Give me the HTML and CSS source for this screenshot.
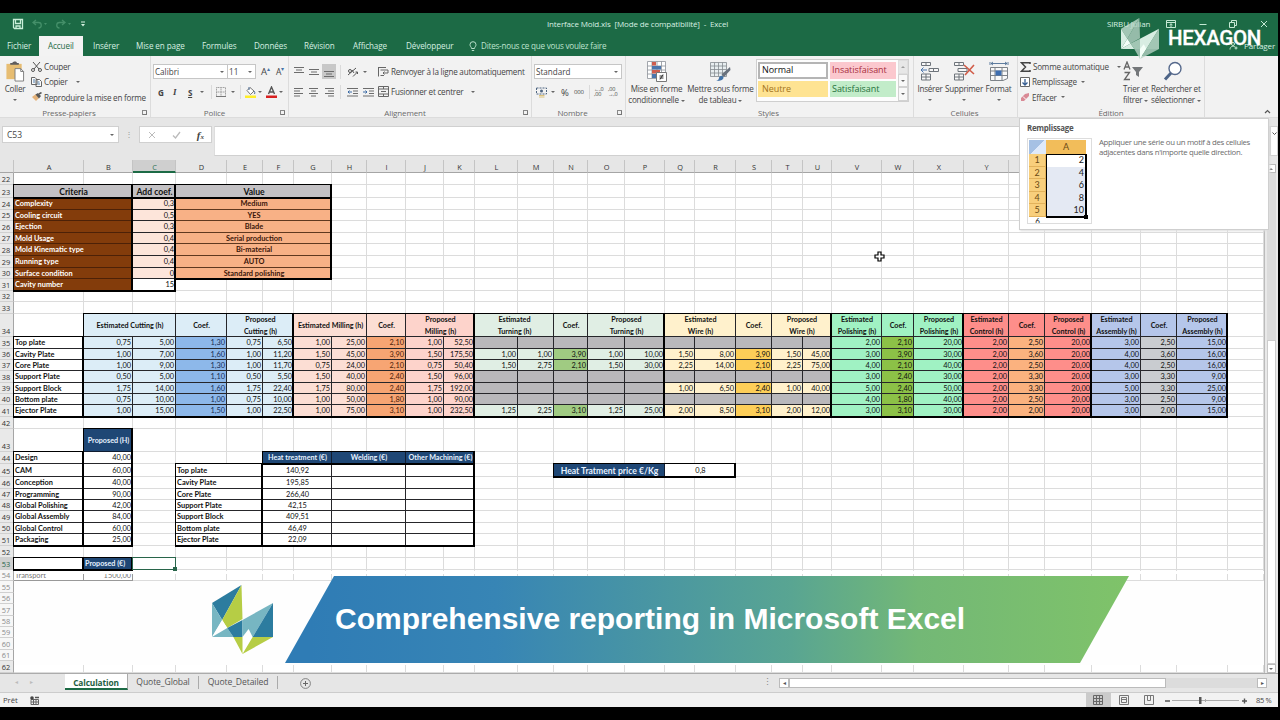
FILE: index.html
```html
<!DOCTYPE html>
<html lang="fr">
<head>
<meta charset="utf-8">
<title>Interface Mold.xls - Excel</title>
<link rel="stylesheet" href="styles.css">
</head>
<body>
<svg class="defs" width="0" height="0">
  <symbol id="mark" viewBox="0 0 60 69" preserveAspectRatio="none">
    <path class="m-dark" d="M0 18 29 0 10 35Z"/>
    <path class="m-light" d="M0 18 10 35 0 52Z"/>
    <path class="m-green" d="M29 0 30 34 15 43 10 35Z"/>
    <path class="m-white" d="M10 35 15 43 0 52Z"/>
    <path class="m-light" d="M0 52 15 43 21 52Z"/>
    <path class="m-dark" d="M15 43 30 35V52H21Z"/>
    <path class="m-light" d="M30 35 60 18 40 52H30Z"/>
    <path class="m-white" d="M30 69V52L36 44 40 52Z"/>
    <path class="m-dark" d="M60 18V52H40Z"/>
    <path class="m-green" d="M40 52H60L30 69ZM21 52H30V69Z"/>
  </symbol>
</svg>
<div class="window">
  <header class="titlebar">
    <div class="quick">
      <svg width="12" height="12" viewBox="0 0 12 12"><path d="M1.5 1.5H10.5V10.5H2.5L1.5 9.5ZM3.5 1.5V5.5H8.5V1.5M4 10.5V8H8V10.5" fill="none" stroke="#c9efd9" stroke-width="1.3"/></svg>
      <svg class="dim" width="16" height="10" viewBox="0 0 16 10"><path d="M1 3.5H6.5A2.7 2.7 0 0 1 6.5 9M4 1 1 3.5 4 6" fill="none" stroke="#75bd95" stroke-width="1.3"/><path d="M12 4h3l-1.5 2z" fill="#75bd95"/></svg>
      <svg class="dim" width="16" height="10" viewBox="0 0 16 10"><path d="M9 3.5H3.5A2.7 2.7 0 0 0 3.5 9M6 1 9 3.5 6 6" fill="none" stroke="#75bd95" stroke-width="1.3"/><path d="M12 4h3l-1.5 2z" fill="#75bd95"/></svg>
      <svg width="6" height="6" viewBox="0 0 6 6"><path d="M1 1H5" stroke="#d5f0e0"/><path d="M1 3h4L3 5.5z" fill="#d5f0e0"/></svg>
    </div>
    <div class="doc">Interface Mold.xls&nbsp; [Mode de compatibilité]&nbsp; -&nbsp; Excel</div>
    <div class="user">SIRBU Julian</div>
    <div class="winbtns">
      <svg width="10" height="8" viewBox="0 0 10 8"><path d="M.5.5H9.5V7.5H.5ZM.5 2.5H9.5M5 7V4M3.500 5 5 3.700 6.500 5" fill="none" stroke="#c5e9d4"/></svg>
      <svg width="8" height="8" viewBox="0 0 8 8"><path d="M.5 4.500h7" stroke="#c5e9d4"/></svg>
      <svg width="8" height="8" viewBox="0 0 8 8"><path d="M.5 2.500h5v5h-5zM2.500 2V.5h5v5H6" fill="none" stroke="#c5e9d4"/></svg>
      <svg width="8" height="8" viewBox="0 0 8 8"><path d="M1 1 7 7M7 1 1 7" stroke="#c5e9d4"/></svg>
    </div>
  </header>
  <nav class="tabs">
    <span>Fichier</span><span class="on">Accueil</span><span>Insérer</span><span>Mise en page</span><span>Formules</span><span>Données</span><span>Révision</span><span>Affichage</span><span>Développeur</span>
    <span class="tell"><svg width="8" height="11" viewBox="0 0 8 11"><path d="M2.500 7.500C2.500 6 1 5.500 1 3.700a3 3 0 0 1 6 0C7 5.500 5.500 6 5.500 7.500ZM2.800 9.500H5.200" fill="none" stroke="#b7dfc8"/></svg>Dites-nous ce que vous voulez faire</span>
    <span class="share"><svg width="9" height="8" viewBox="0 0 9 8"><circle cx="4" cy="2" r="1.500" fill="none" stroke="#c5e9d4"/><path d="M1 7.500C1 4 5 3.500 6 5M5.500 6h3M7 4.500v3" fill="none" stroke="#c5e9d4"/></svg>Partager</span>
  </nav>

  <section class="ribbon">
    <div class="group g-clip">
      <div class="body">
        <div class="big paste">
          <svg width="20" height="22" viewBox="0 0 20 22"><path d="M1 3H17V19H1Z" fill="#e7bd72"/><path d="M5 4V2H7Q8 0 10 0.500Q12 0 12 2H14V4Z" fill="#5f5c5c"/><path d="M10 8H16L19 11V21H10Z" fill="#fff" stroke="#7d7d7d"/><path d="M16 8V11H19" fill="none" stroke="#7d7d7d"/></svg>
          <span>Coller</span><i class="dd"></i>
        </div>
        <div class="lines">
          <div><svg width="11" height="10" viewBox="0 0 11 10"><path d="M2 0 8 7M9 0 3 7" stroke="#555"/><circle cx="2" cy="8" r="1.500" fill="none" stroke="#555"/><circle cx="9" cy="8" r="1.500" fill="none" stroke="#555"/></svg>Couper</div>
          <div><svg width="11" height="10" viewBox="0 0 11 10"><path d="M.5.5H4L6 2.500V7.500H.5ZM5 2.500H8.500L10.500 4.500V9.500H5Z" fill="#fafafa" stroke="#666"/><path d="M2 3h2M2 5h2M6.500 5h2M6.500 7h2.500" stroke="#4d7cab"/></svg>Copier <i class="dd gap"></i></div>
          <div><svg width="11" height="10" viewBox="0 0 11 10"><path d="M1 5 5 2 8 6 5 9Z" fill="#e3b27a"/><path d="M4.500 2.500 7 1 10 4 8 6.500Z" fill="#555"/><path d="M8 2 10.500.5" stroke="#555" stroke-width="1.500"/></svg>Reproduire la mise en forme</div>
        </div>
      </div>
      <footer>Presse-papiers<b class="launch"></b></footer>
    </div>

    <div class="group g-font">
      <div class="body col">
        <div class="row">
          <div class="combo fontname">Calibri<i class="dd"></i></div><div class="combo fontsize">11<i class="dd"></i></div>
          <span class="aa">A<sup>▴</sup></span><span class="aa small">A<sup>▾</sup></span>
        </div>
        <div class="row second">
          <b class="c1">G</b><em class="c2">I</em><b class="c2 und">S</b><i class="dd"></i>
          <u class="sep"></u>
          <svg width="10" height="10" viewBox="0 0 10 10"><path d="M.5.5H9.500V9.500H.5ZM5 .5V9.500M.5 5H9.500" fill="none" stroke="#999" stroke-dasharray="1 .6"/><path d="M0 9.500H10" stroke="#777"/></svg><i class="dd gap"></i>
          <u class="sep"></u>
          <svg width="11" height="12" viewBox="0 0 11 12"><path d="M2 4.500 5 1.500 9 5 5.500 8.500Z" fill="#fff" stroke="#777"/><path d="M4 4V1M9 5q1.500 2 .5 3" fill="none" stroke="#4f6f97"/><path d="M0 9.500H11V12H0Z" fill="#ffee29"/></svg><i class="dd"></i>
          <svg class="fc" width="11" height="12" viewBox="0 0 11 12"><path d="M2.500 8 5.500 1 8.500 8M3.700 6H7.500" fill="none" stroke="#555" stroke-width="1.400"/><path d="M0 9.500H11V12H0Z" fill="#d82020"/></svg><i class="dd"></i>
        </div>
      </div>
      <footer>Police<b class="launch"></b></footer>
    </div>

    <div class="group g-align">
      <div class="body cols2">
        <div class="alignico">
          <div class="row">
            <svg class="al" viewBox="0 0 10 10"><path d="M0 .5H10M2 3H8M0 5.500H10"/></svg>
            <svg class="al" viewBox="0 0 10 10"><path d="M0 2.500H10M2 5H8M0 7.500H10"/></svg>
            <span class="pressed"><svg class="al" viewBox="0 0 10 10"><path d="M0 4.500H10M2 7H8M0 9.500H10"/></svg></span>
            <u class="sep"></u>
            <svg width="11" height="10" viewBox="0 0 11 10"><path d="M1 8 9 1M6 9.500 10.500 5M8.500 5h2v2" fill="none" stroke="#555"/><circle cx="3" cy="4" r="1.500" fill="none" stroke="#555"/><path d="M5 3 7 6" stroke="#555"/></svg><i class="dd"></i>
          </div>
          <div class="row second">
            <svg class="al" viewBox="0 0 10 10"><path d="M0 1.500H9M0 4H6M0 6.500H9M0 9H6"/></svg>
            <svg class="al" viewBox="0 0 10 10"><path d="M0 1.500H9M2 4H7M0 6.500H9M2 9H7"/></svg>
            <svg class="al" viewBox="0 0 10 10"><path d="M1 1.500H10M4 4H10M1 6.500H10M4 9H10"/></svg>
            <u class="sep"></u>
            <svg class="ind" viewBox="0 0 11 10"><path d="M0 1.500H11M6 4H11M6 6.500H11M0 9H11"/><path class="blue" d="M5 5H1M2.500 3.500 1 5 2.500 6.500"/></svg>
            <svg class="ind" viewBox="0 0 11 10"><path d="M0 1.500H11M6 4H11M6 6.500H11M0 9H11"/><path class="blue" d="M0 5H4M2.500 3.500 4 5 2.500 6.500"/></svg>
          </div>
        </div>
        <div class="aligntxt">
          <div><svg width="11" height="11" viewBox="0 0 11 11"><path d="M.5 1V10.500M.5 1.500H8M2.500 4H10V7H5M2.500 9.500H6M6.500 5.500 5 7 6.500 8.500" fill="none" stroke="#666"/></svg>Renvoyer à la ligne automatiquement</div>
          <div><svg width="11" height="11" viewBox="0 0 11 11"><path d="M.5.5H10.500V10.500H.5ZM.5 3H10.500M.5 8H10.500M5.500.5V3M5.500 8V10.500M3 5.500H8" fill="none" stroke="#666"/></svg>Fusionner et centrer <i class="dd gap"></i></div>
        </div>
      </div>
      <footer>Alignement<b class="launch"></b></footer>
    </div>

    <div class="group g-num">
      <div class="body col">
        <div class="row"><div class="combo std">Standard<i class="dd"></i></div></div>
        <div class="row second numrow">
          <svg width="11" height="11" viewBox="0 0 11 11"><path d="M.5 1H10.500V7H.5Z" fill="none" stroke="#4e6581" stroke-dasharray="2 1"/><circle cx="5.500" cy="4" r="1.500" fill="#4e6581"/><path d="M3 8.500H8.500M3 10H8.500" stroke="#dcc27c"/></svg><i class="dd"></i>
          <span class="pct">%</span><span class="mil">000</span><u class="sep"></u>
          <span class="dec">←,0<br>,00</span><span class="dec">,00<br>→,0</span>
        </div>
      </div>
      <footer>Nombre<b class="launch"></b></footer>
    </div>

    <div class="group g-style">
      <div class="body">
        <div class="big cond">
          <svg width="20" height="21" viewBox="0 0 20 21"><path d="M.5.500H18.500V17.500H.5ZM.5 5H18.500M.5 9H18.500M.5 13H18.500M5 .5V17.500M10 .5V17.500M14.500 .5V17.500" fill="#fff" stroke="#8d9299" stroke-width=".8"/><path d="M5 1H9V4.500H5ZM5 9H13V12.500H5Z" fill="#cf5d4e"/><path d="M5 5H14V8.500H5ZM5 13H9V17H5Z" fill="#4a76ad"/><path d="M9.500 11.500H19.500V20.500H9.500Z" fill="#fff" stroke="#777"/><path d="M12.500 15h4M12.500 17h4M16 13.500 13 18.500" stroke="#333"/></svg>
          <span>Mise en forme</span><span>conditionnelle<i class="dd in"></i></span>
        </div>
        <div class="big fmt">
          <svg width="21" height="21" viewBox="0 0 21 21"><path d="M.5 1.500H16.500V15.500H.5ZM.5 5H16.500M.5 8.500H16.500M.5 12H16.500M4.500 1.500V15.500M8.500 1.500V15.500M12.500 1.500V15.500" fill="#e8eef0" stroke="#848a8f" stroke-width=".8"/><path d="M20 6 20.500 9 14 16 11.500 13.500Z" fill="#69727d"/><path d="M6 20Q9 19 9 16.500Q11 13.500 13.500 16Q14 20 6 20Z" fill="#4173a8"/></svg>
          <span>Mettre sous forme</span><span>de tableau<i class="dd in"></i></span>
        </div>
        <div class="gallery">
          <div class="swatches">
            <div class="st normal">Normal</div><div class="st bad">Insatisfaisant</div>
            <div class="st neutral">Neutre</div><div class="st good">Satisfaisant</div>
          </div>
          <div class="galbtn"><span><i class="dd up"></i></span><span><i class="dd"></i></span><span><i class="dd bar"></i></span></div>
        </div>
      </div>
      <footer>Styles</footer>
    </div>

    <div class="group g-cells">
      <div class="body">
        <div class="big"><svg width="20" height="21" viewBox="0 0 20 21"><path d="M1.500 1.500H10.500V4.500H1.500ZM6 1.500V4.500M1.500 13H10.500V19H1.500ZM1.500 16H10.500M6 13V19M9 7.500H18.500V10.500H9ZM13.500 7.500V10.500" fill="#f7f7f7" stroke="#6e747b"/><path d="M7 9H1M3.500 6.500 1 9 3.500 11.500" fill="none" stroke="#4a76ad"/></svg><span>Insérer</span><i class="dd"></i></div>
        <div class="big"><svg width="22" height="21" viewBox="0 0 22 21"><path d="M1.500 1.500H10.500V4.500H1.500ZM6 1.500V4.500M1.500 13H10.500V19H1.500ZM1.500 16H10.500M6 13V19M5 7.500H14V10.500H5Z" fill="#f7f7f7" stroke="#6e747b"/><path d="M11 4 21 13M21 4 12 14" stroke="#d15c48" stroke-width="1.600"/></svg><span>Supprimer</span><i class="dd"></i></div>
        <div class="big"><svg width="20" height="21" viewBox="0 0 20 21"><path d="M1 1V4M19 1V4M2 2.500H18M4 1 2 2.500 4 4M16 1 18 2.500 16 4" fill="none" stroke="#4e6f95" stroke-width=".9"/><path d="M1.500 6.500H18.500V17.500L14 19.500H1.500ZM1.500 10H18.500M1.500 14.500H18.500M6 6.500V19M13 6.500V19" fill="#f9f9f9" stroke="#7d8288"/><path d="M6.500 9.500H12.500V14.500H6.500Z" fill="#3e6eb0"/></svg><span>Format</span><i class="dd"></i></div>
      </div>
      <footer>Cellules</footer>
    </div>

    <div class="group g-edit">
      <div class="body">
        <div class="lines">
          <div><svg width="11" height="10" viewBox="0 0 11 10"><path d="M10 2V.8H1.500L5.500 5 1.500 9.200H10V8" fill="none" stroke="#444" stroke-width="1.500"/></svg>Somme automatique <i class="dd gap"></i></div>
          <div><svg width="10" height="10" viewBox="0 0 10 10"><path d="M.5.5H9.500V9.500H.5Z" fill="#fff" stroke="#666"/><path d="M5 2V8M2.500 5.500 5 8 7.500 5.500" fill="none" stroke="#355d91" stroke-width="1.300"/></svg>Remplissage<i class="dd in"></i></div>
          <div><svg width="10" height="9" viewBox="0 0 10 9"><path d="M5 1 9 0 9 3 4 8 1 8 1 5Z" fill="#d98995"/><path d="M3 3.500 6 6.500" stroke="#fff"/></svg>Effacer<i class="dd in"></i></div>
        </div>
        <div class="big sort"><svg width="21" height="21" viewBox="0 0 21 21"><path d="M1 8.500 4 1 7 8.500M2 6H6M1.500 11.500H6.500L1.500 18.500H7" fill="none" stroke="#666" stroke-width="1.300"/><path d="M9 6H20L16 11V16L13 14V11Z" fill="#74777a"/></svg><span>Trier et</span><span>filtrer<i class="dd in"></i></span></div>
        <div class="big find"><svg width="20" height="21" viewBox="0 0 20 21"><path d="M8 12 2 18.500" stroke="#4d6487" stroke-width="3"/><circle cx="12" cy="7.500" r="6" fill="#fff" stroke="#56698c" stroke-width="1.400"/></svg><span>Rechercher et</span><span>sélectionner<i class="dd in"></i></span></div>
      </div>
      <footer>Édition</footer>
    </div>
    <div class="collapse"><svg width="7" height="5" viewBox="0 0 7 5"><path d="M1 4 3.500 1.500 6 4" fill="none" stroke="#555" stroke-width="1.200"/></svg></div>
  </section>

  <section class="formula">
    <div class="namebox">C53<i class="dd"></i></div>
    <div class="grip">⋮</div>
    <div class="fx"><svg width="8" height="8" viewBox="0 0 8 8"><path d="M1 1 7 7M7 1 1 7" stroke="#bbb"/></svg><svg width="9" height="8" viewBox="0 0 9 8"><path d="M1 4.500 3.500 7 8 1" fill="none" stroke="#bbb" stroke-width="1.300"/></svg><em>f<small>x</small></em></div>
    <div class="entry"></div>
    <div class="expand"><svg width="5" height="4" viewBox="0 0 5 4"><path d="M.5.5 2.500 2.500 4.500.5" fill="none" stroke="#555"/></svg></div>
  </section>

  <main class="work">
    <div class="sheet" id="sheet"></div>
    <div class="vscroll"><span class="arrow"><i class="dd up"></i></span><span class="track"></span><span class="thumb"></span><span class="arrow"><i class="dd"></i></span></div>
  </main>

  <div class="sheettabs">
    <div class="nav"><span>◂</span><span>▸</span></div>
    <span class="tab on">Calculation</span><span class="tab">Quote_Global</span><span class="tab">Quote_Detailed</span>
    <svg class="plus" width="11" height="11" viewBox="0 0 11 11"><circle cx="5.500" cy="5.500" r="4.900" fill="none" stroke="#777" stroke-width=".9"/><path d="M3 5.500H8M5.500 3V8" stroke="#666"/></svg>
    <span class="dots">⋮</span>
    <div class="hscroll"><span class="hbtn">◂</span><span class="hthumb"></span><span class="htrack"></span><span class="hbtn">▸</span></div>
  </div>
  <div class="status">
    <span class="ready">Prêt</span>
    <svg width="9" height="9" viewBox="0 0 9 9"><path d="M1 3.500H8.500V8.500H1Z M1 6H8.500M3.500 3.500V8.500M6 3.500V8.500" fill="none" stroke="#666"/><circle cx="2" cy="2" r="1.800" fill="#444"/><path d="M5 1.500H9" stroke="#555" stroke-width="1.500"/></svg>
    <div class="views">
      <span class="act"><svg width="10" height="10" viewBox="0 0 10 10"><path d="M.5.5H9.500V9.500H.5ZM.5 3.500H9.500M.5 6.500H9.500M3.500.5V9.500M6.500.5V9.500" fill="none" stroke="#666"/></svg></span>
      <span><svg width="10" height="10" viewBox="0 0 10 10"><path d="M.5.5H9.500V9.500H.5ZM2.500 2.500H7.500V7.500H2.500ZM3 4.500H7" fill="none" stroke="#777"/></svg></span>
      <span><svg width="10" height="10" viewBox="0 0 10 10"><path d="M.5.5H9.500V9.500H.5ZM3.500.5V5.500H6.500V.5" fill="none" stroke="#777"/></svg></span>
    </div>
    <svg class="zoomer" width="84" height="9" viewBox="0 0 84 9"><path d="M1 5H6M78 5H83M80.500 2.500V7.500" stroke="#555" stroke-width="1.400"/><path d="M8 4.500H75M41.500 3V6" stroke="#aaa"/><path d="M35 1H37.500V8H35Z" fill="#555"/></svg>
    <span class="zoom">85 %</span>
  </div>
</div>

<aside class="tip">
  <h4>Remplissage</h4>
  <div class="tipbody">
    <div class="mini">
      <span class="corner"></span><span class="mh">A</span>
      <span class="mr">1</span><span class="mv first">2</span>
      <span class="mr">2</span><span class="mv">4</span>
      <span class="mr">3</span><span class="mv">6</span>
      <span class="mr">4</span><span class="mv">8</span>
      <span class="mr">5</span><span class="mv">10</span>
      <span class="cut">6</span>
      <span class="miniframe"></span>
    </div>
    <p>Appliquer une série ou un motif à des cellules<br>adjacentes dans n'importe quelle direction.</p>
  </div>
</aside>

<div class="watermark"><svg class="mono" width="38" height="41"><use href="#mark"/></svg><span>HEXAGON</span></div>

<svg class="cursor" width="11" height="11" viewBox="0 0 11 11"><path d="M4 1H7V4H10V7H7V10H4V7H1V4H4Z" fill="#fff" stroke="#000" stroke-width="1.200"/></svg>

<div class="veil"></div>
<div class="lower">
  <svg class="brand" width="61" height="69"><use href="#mark"/></svg>
  <div class="banner">Comprehensive reporting in Microsoft Excel</div>
</div>
<script src="sheet.js"></script>
</body>
</html>
```
FILE: styles.css
```css
* { box-sizing: border-box; }
body { margin: 0; padding-top: 13px; width: 1280px; height: 720px; background: #000; overflow: hidden; font-family: "Open Sans", "Noto Sans", sans-serif; font-size: 8.1px; color: #444; position: relative; white-space: nowrap; }
.defs { position: absolute; }
svg { flex: none; display: block; }
.window { width: 1278px; height: 694px; background: #e6e6e6; display: flex; flex-direction: column; }

.titlebar { height: 23px; background: #1c6a45; display: grid; grid-template-columns: 547px 560px 59px 1fr; align-items: center; color: #d6efe1; font-size: 8px; letter-spacing: -.15px; padding-bottom: 2px; }
.quick { display: flex; align-items: center; padding-left: 12px; gap: 8px; }
.quick svg:last-child { margin-left: 0; }
.dim { opacity: .45; }
.winbtns { display: flex; gap: 22.500px; align-items: center; }

.tabs { height: 20px; background: #1c6a45; color: #d6efe1; display: grid; grid-template-columns: 39px 44px 43px 66px 52px 50px 49px 53px 64px 1fr 58px; font-size: 8.1px; letter-spacing: -.1px; line-height: 20px; }
.tabs span { padding-left: 10px; }
.tabs span:first-child { padding-left: 7px; }
.tabs .on { background: #f3f3f3; color: #1c6a45; padding-left: 9px; }
.tabs .tell { display: flex; align-items: center; gap: 4px; padding-left: 9px; color: #bfe3cf; letter-spacing: -.22px; }
.tabs .share { display: flex; align-items: center; gap: 6px; padding: 0 0 0 9px; font-size: 8px; margin-left: 0; }

.ribbon { height: 62px; background: #f2f2f2; display: flex; border-bottom: 1px solid #dcdcdc; letter-spacing: -.22px; }
.group { border-right: 1px solid #dcdcdc; display: flex; flex-direction: column; flex: none; }
.group .body { height: 50px; display: flex; flex: none; }
.group footer { height: 12px; line-height: 13px; text-align: center; color: #6a6a6a; font-size: 8px; position: relative; letter-spacing: -.12px; }
.launch { position: absolute; right: 3px; top: 4px; width: 5px; height: 5px; border: solid #888; border-width: 1px 0 0 1px; }
.launch::after { content: ""; position: absolute; right: 0; bottom: 0; width: 3px; height: 3px; border: solid #777; border-width: 0 1px 1px 0; }
.g-clip { width: 151px; } .g-clip footer { padding-right: 12px; }
.g-font { width: 138px; } .g-align { width: 243px; } .g-num { width: 94px; }
.g-style { width: 288px; } .g-style footer { padding-right: 2px; } .g-cells { width: 104px; } .g-cells footer { padding-right: 2px; } .g-edit { width: 187px; }
.g-font footer { padding-right: 10px; } .g-align footer { padding-right: 10px; } .g-num footer { padding-right: 12px; }
.dd { display: inline-block; flex: none; width: 0; height: 0; border: 2px solid transparent; border-top: 2.5px solid #666; border-bottom: 0; vertical-align: middle; }
.dd.gap { margin-left: 6px; } .dd.in { margin-left: 2px; }
.dd.up { border-top: 0; border-bottom: 2.5px solid #777; }
.big { display: flex; flex-direction: column; align-items: center; line-height: 10.800px; padding-top: 5px; }
.big svg { margin-bottom: 2px; height: 21px; }
.big > .dd { margin-top: 4px; }
.paste { width: 30px; }
.lines { display: flex; flex-direction: column; padding: 3px 0 0 1px; line-height: 15.4px; }
.lines div { display: flex; align-items: center; gap: 2px; height: 15.4px; }
.body.col { flex-direction: column; }
.row { display: flex; align-items: center; height: 15px; margin-top: 8px; }
.row.second { margin-top: 5px; height: 16px; }
.combo { height: 15px; border: 1px solid #c6c6c6; background: #fff; display: flex; align-items: center; justify-content: space-between; padding: 0 3px 0 1px; letter-spacing: 0; }
.fontname { width: 75px; margin-left: 2px; } .fontsize { width: 28px; border-left: 0; }
.aa { margin-left: 5px; font-size: 9.5px; width: 10px; } .aa.small { font-size: 8.5px; }
.aa sup { font-size: 6px; color: #4472a8; line-height: 0; vertical-align: 4px; }
.c1 { margin-left: 7px; width: 15px; } .c2 { width: 15px; font-family: "Liberation Serif", serif; font-size: 9px; font-weight: bold; } .und { text-decoration: underline; width: 12px; font-family: inherit; font-size: 8px; }
.sep { width: 1px; height: 14px; background: #dadada; margin: 0 6px; flex: none; }
.g-font .second svg { margin: 0 2px 0 0; } .g-font .second .fc { margin-left: 4px; }
.g-font .second .sep { margin: 0 4px 0 7px; }
.g-font .second .dd.gap { margin-left: 3px; }
.g-font .second .dd.gap + .sep { margin-left: 5px; }
.alignico { width: 89px; padding-left: 5px; }
.alignico .row { gap: 5px; }
.al { width: 10px; height: 10px; } .ind { width: 11px; height: 10px; }
.al path, .ind path { stroke: #6c6c6c; stroke-width: 1; fill: none; } .ind .blue { stroke: #3b6ba5; }
.pressed { width: 14px; height: 15px; background: #c8c8c8; display: flex; align-items: center; justify-content: center; margin: 0 -2px; }
.alignico .sep { margin: 0 1px; }
.aligntxt { padding-top: 5px; }
.aligntxt div { display: flex; align-items: center; gap: 2px; height: 20.5px; }
.std { width: 88px; margin-left: 2px; }
.numrow { padding-left: 4px; } .numrow .dd { margin-left: 4px; }
.pct { font-size: 9.5px; margin-left: 6px; width: 13px; } .mil { font-size: 6px; width: 10px; }
.numrow .sep { margin: 0 4px 0 5px; } .dec { font-size: 5.5px; line-height: 5px; width: 14px; letter-spacing: -.2px; }
.cond { width: 61px; } .fmt { width: 67px; }
.gallery { width: 153px; height: 43px; margin: 3px 0 0 2px; border: 1px solid #cfcfcf; background: #fdfdfd; display: flex; }
.swatches { width: 141px; padding: 2px 1px; display: grid; grid-template-columns: 70px 66px; grid-template-rows: 17px 16px; gap: 2px; align-content: start; }
.st { font-size: 9px; padding-left: 4px; line-height: 15px; letter-spacing: -.05px; }
.st.normal { border: 2px solid #b5b5b5; padding-left: 2px; line-height: 12px; color: #111; background: #fff; }
.st.bad { background: #fbc8ce; color: #a82e3d; padding-left: 2px; } .st.neutral { background: #fee392; color: #a3731c; } .st.good { background: #c2ecc9; color: #24703b; padding-left: 2px; }
.galbtn { width: 10px; height: 41px; display: grid; grid-template-rows: 14px 13px 14px; }
.galbtn span { border: 1px solid #d2d2d2; display: flex; align-items: center; justify-content: center; background: #f8f8f8; }
.galbtn span:first-child { background: #dedede; opacity: .7; }
.dd.bar { box-shadow: 0 -4px 0 -1.500px #777; }
.g-cells .body { padding-left: 1px; } .g-cells .big { width: 30px; } .g-cells .big:nth-child(2) { width: 38px; } .g-cells .big:nth-child(3) { width: 31px; }
.g-edit .lines { width: 101px; padding-left: 2px; }
.sort { width: 31px; } .find { width: 51px; }
.g-edit .big { align-items: flex-start; } .g-edit .find svg { margin-left: 12px; } .g-edit .sort { padding-left: 4px; } .g-edit .find { padding-left: 1px; }
.collapse { margin-left: auto; align-self: flex-end; padding: 0 7px 3px 0; }

.formula { height: 42px; padding: 8px 0 0 2px; display: flex; align-items: flex-start; }
.namebox, .fx { height: 17px; background: #fff; border: 1px solid #d0d0d0; display: flex; align-items: center; }
.namebox { width: 117px; justify-content: space-between; padding: 0 4px; font-size: 8.500px; }
.grip { width: 20px; text-align: center; color: #999; line-height: 16px; }
.fx { width: 73px; justify-content: space-between; padding: 0 7px 0 8px; margin-right: 2px; }
.fx em { font: italic bold 11px "Liberation Serif", serif; color: #444; } .fx small { font-size: 7px; }
.entry { flex: 1; height: 30px; background: #fff; border: 1px solid #d0d0d0; border-left-color: #ddd; }
.expand { width: 8px; height: 30px; background: #fff; border: 1px solid #d0d0d0; padding: 5px 0 0 1px; }

.work { height: 513px; display: grid; grid-template-columns: 1264px 14px; }
.sheet { display: grid; background: #fff; position: relative; font-family: Lato, "Open Sans", sans-serif; font-size: 7.400px; color: #111; overflow: hidden; }
.sheet > * { min-width: 0; min-height: 0; }
.colh { background: #e6e6e6; border-right: 1px solid #c4c4c4; border-bottom: 1px solid #a5a5a5; text-align: center; font-family: "Open Sans", sans-serif; line-height: 14px; color: #333; padding-left: 1px; }
.colh.sel { background: #cfcfcf; border-bottom: 2px solid #1c6a45; color: #35745a; }
.rowh { background: #e9e9e9; border-right: 1px solid #a5a5a5; border-bottom: 1px solid #d0d0d0; display: flex; align-items: flex-end; justify-content: center; line-height: 10px; padding-right: 1px; font-family: "Open Sans", sans-serif; color: #333; }
.rowh.sel { background: #d0d0d0; color: #28654a; }
.rowh.pale { color: #8a8a8a; background: #f7f7f7; }
.vline { border-right: 1px solid #dcdcdc; } .hline { border-bottom: 1px solid #dcdcdc; }
.cell { display: flex; align-items: center; justify-content: flex-end; padding: 1px 1px 0 0; border: solid #26262a; border-width: 0 1px 1px 0; line-height: 10px; overflow: hidden; background: #fff; }
.cell.c { justify-content: center; text-align: center; padding: 1px 0 0 1px; } .cell.l { justify-content: flex-start; padding-left: 1px; } .cell.b { font-weight: 700; }
.cell.hd { line-height: 11.500px; } .cell.lg { font-size: 8.600px; } .cell.sm { font-size: 7.200px; }
.cell.ghost { color: #777; border-color: #999; }
.grey { background: #c3c1c4; } .brown { background: #833c0b; color: #fff; border-color: #4d2107; } .rose { background: #fde5da; } .peach { background: #f8b186; border-color: #60381f; color: #3a160a; }
.sky { background: #dcedf7; } .blue { background: #8db8ea; color: #172c55; } .blush { background: #fcded4; } .orange { background: #f7a573; color: #4c1c0a; } .pink { background: #fdd3cb; }
.mint { background: #e0eee4; } .leaf { background: #a0cb82; } .ash { background: #b9b8bb; } .cream { background: #fff1cc; } .gold { background: #fdce58; }
.aqua { background: #a0f2c3; } .lime { background: #8cc147; } .red { background: #fe8e8a; } .sand { background: #fbb27f; } .peri { background: #b5c6ea; } .silver { background: #c9ccd0; }
.navy { background: #1f4775; color: #e7f2ff; border-color: #101c30; }
.frame { border: 1.5px solid #000; border-right-width: 2px; border-bottom-width: 2px; margin: -1px 0 -1px -1px; z-index: 2; pointer-events: none; }
.select { border: 1px solid #28654a; margin: -1px 0 0 -1px; z-index: 3; position: relative; }
.select::after { content: ""; position: absolute; right: -2px; bottom: -2px; width: 4px; height: 4px; background: #28654a; }
.vscroll { display: flex; flex-direction: column; align-items: center; border-left: 1px solid #bbb; padding: 4px 3px 0 2px; background: #e9e9e9; }
.vscroll span { width: 9px; } .vscroll .arrow { height: 9px; background: #fff; border: 1px solid #bbb; display: flex; align-items: center; justify-content: center; flex: none; }
.track { height: 167px; background: #dcdcdc; } .thumb { flex: 1; background: #fff; border: 1px solid #ccc; }

.sheettabs { height: 19px; display: flex; align-items: stretch; background: #e6e6e6; border-top: 1px solid #ababab; font-size: 8.600px; line-height: 17px; color: #555; letter-spacing: -.1px; }
.nav { width: 65px; display: flex; gap: 12px; padding-left: 15px; color: #bbb; font-size: 6px; }
.tab { width: 71px; text-align: center; border-right: 1px solid #aaa; margin: 2px 0 3px; line-height: 13px; }
.tab.on { width: 63px; background: #fff; color: #1d6042; font-weight: 700; font-size: 8.300px; border-bottom: 2px solid #1c6a45; margin: 0 0 2px; line-height: 17px; }
.tab:nth-of-type(3) { width: 79px; }
.plus { margin: 4px 0 0 22px; }
.dots { margin-left: auto; color: #888; width: 16px; }
.hscroll { width: 488px; margin: 4px 11px 4px 0; display: flex; background: #dcdcdc; }
.hbtn { width: 10px; background: #fff; border: 1px solid #bbb; font-size: 6px; line-height: 8px; text-align: center; }
.hthumb { width: 377px; background: #fff; border: 1px solid #bbb; } .htrack { flex: 1; }
.status { height: 15px; background: #f2f2f2; border-top: 1px solid #ccc; display: flex; align-items: center; font-size: 7.800px; padding-left: 3px; letter-spacing: -.1px; }
.ready { width: 27px; } .views { margin-left: auto; display: flex; } .views span { width: 25.500px; height: 14px; display: flex; align-items: center; justify-content: center; } .views .act { background: #cbcbcb; }
.zoomer { margin-left: 2px; } .zoom { width: 30px; padding-left: 8px; font-size: 7.500px; letter-spacing: -.3px; }

.tip { position: absolute; left: 1019px; top: 118px; width: 250px; height: 112px; background: #fff; border: 1px solid #cfcfcf; box-shadow: 1px 1px 2px #ddd; padding: 4px 8px 0 7px; color: #6a6a6a; z-index: 5; }
.tip h4 { margin: 0; font-size: 7.900px; line-height: 11px; color: #555; letter-spacing: -.25px; }
.tipbody { display: flex; margin-top: 4px; }
.tip p { margin: -1px 0 0 7px; line-height: 10px; font-size: 7.800px; letter-spacing: -.32px; }
.mini { width: 65px; height: 86px; border: 1px solid #ddd; display: grid; grid-template-columns: 17px 40px; grid-template-rows: 14px repeat(5, 12.600px) 7px; padding: 1px; position: relative; font-family: Lato, sans-serif; font-size: 9px; color: #222; overflow: hidden; flex: none; }
.corner { background: linear-gradient(135deg, #a6c1e4 50%, #dfeafa 50%); } .mh { background: #f2bd5a; text-align: center; line-height: 14px; color: #6a4a14; }
.mr { background: #f8cf7c; border: 1px solid #e2b25b; border-width: 0 1px 1px 0; text-align: center; line-height: 12px; color: #6a4a14; }
.mv { background: #e4e9f3; text-align: right; line-height: 12px; padding-right: 2px; } .mv.first { background: #fff; }
.cut { text-align: center; line-height: 9px; font-size: 8px; }
.miniframe { position: absolute; left: 18px; top: 15px; width: 41px; height: 64px; border: 2px solid #000; border-top-width: 1px; border-left-width: 1px; }
.miniframe::after { content: ""; position: absolute; right: -3px; bottom: -3px; width: 4px; height: 4px; background: #000; }

.watermark { position: absolute; left: 1121px; top: 17px; display: flex; align-items: center; z-index: 6; color: #fff; font: 500 20.500px/42px Roboto, sans-serif; letter-spacing: -.3px; }
.watermark span { margin-left: 9px; -webkit-text-stroke: .3px #fff; }
.m-dark { fill: var(--dark); } .m-light { fill: var(--light); } .m-green { fill: var(--green); } .m-white { fill: var(--white); }
.mono { --dark: rgba(200,224,211,.78); --light: rgba(232,248,240,.92); --green: rgba(180,208,194,.8); --white: #f4fff8; }
.brand { --dark: #2c7c9f; --light: #77b6c2; --green: #b6cd45; --white: #fff; }
.cursor { position: absolute; left: 874px; top: 251px; z-index: 4; }
.veil { position: absolute; left: 14px; top: 571px; width: 1250px; height: 3px; background: #fff; z-index: 4; }
.lower { position: absolute; left: 14px; top: 581px; width: 1250px; height: 84px; background: #fefefe; padding-left: 198px; display: flex; z-index: 5; }
.brand { margin-top: 4px; }
.banner { margin: -5px 0 0 12px; width: 844px; height: 87px; background: linear-gradient(90deg, #2f7cb5 3%, #3785b5 25%, #59a592 60%, #73b876 75%, #7fc369 100%); clip-path: polygon(49px 0, 100% 0, 795px 100%, 0 100%); color: #fff; font: bold 30px/86px "Liberation Sans", Arial, sans-serif; padding-left: 50px; }
```
FILE: sheet.js
```js
const names = ['A','B','C','D','E','F','G','H','I','J','K','L','M','N','O','P','Q','R','S','T','U','V','W','X','Y','Z','AA','AB','AC','AD','AE'];
const edges = [0,14,84,133,176,227,263,294,332,367,406,444,475,518,554,588,625,665,695,736,772,803,832,882,914,964,1009,1045,1092,1141,1177,1228,1264];
const rowEdges = [160,173,185,198,210,221,233,244,256,268,279,291,302,314,337,349,360,371,383,394,405,417,429,452,464,477,489,500,511,523,534,546,558,570,581,593,604,616,627,638,650,661,673];
const FIRST = 22, LAST = 62;
const sheet = document.getElementById('sheet');
const tracks = e => e.slice(1).map((v, i) => (v - e[i]) + 'px').join(' ');
sheet.style.gridTemplateColumns = tracks(edges);
sheet.style.gridTemplateRows = tracks(rowEdges);

const col = n => names.indexOf(n) + 2;
const row = n => n - FIRST + 2;
function put(area, cls, text) {
  const el = document.createElement('div');
  el.className = cls;
  el.style.gridArea = area;
  if (text) el.innerHTML = text;
  sheet.appendChild(el);
}
function range(ref) {
  const m = ref.match(/([A-Z]+)(\d+)(?::([A-Z]+)(\d+))?/);
  return [row(+m[2]), col(m[1]), row(+(m[4] || m[2])) + 1, col(m[3] || m[1]) + 1].join(' / ');
}
const cell = (ref, cls, text) => put(range(ref), 'cell ' + cls, text);

for (let i = 0; i < names.length; i++) put(`2 / ${i + 2} / -1 / ${i + 3}`, 'vline');
for (let r = FIRST; r <= LAST; r++) put(`${row(r)} / 2 / ${row(r) + 1} / -1`, 'hline');
put('1 / 1', 'colh');
names.forEach((n, i) => put(`1 / ${i + 2}`, 'colh' + (n === 'C' ? ' sel' : ''), n));
for (let r = FIRST; r <= LAST; r++) put(`${row(r)} / 1`, 'rowh' + (r === 53 ? ' sel' : r > 53 && r < 62 ? ' pale' : ''), String(r));

cell('A23:B23', 'c b lg grey', 'Criteria');
cell('C23', 'c b lg grey', 'Add coef.');
cell('D23:G23', 'c b lg grey', 'Value');
[['Complexity','0,3','Medium'],['Cooling circuit','0,5','YES'],['Ejection','0,3','Blade'],['Mold Usage','0,4','Serial production'],['Mold Kinematic type','0,4','Bi-material'],['Running type','0,4','AUTO'],['Surface condition','0','Standard polishing'],['Cavity number','15','']].forEach(([a, b, c], i) => {
  const r = 24 + i;
  cell(`A${r}:B${r}`, 'l b brown', a);
  cell(`C${r}`, r === 31 ? '' : 'rose', b);
  if (c) cell(`D${r}:G${r}`, 'c b peach', c);
});
['A23:B31','C23:C31','D23:G30','A23:G23'].forEach(f => put(range(f), 'frame'));

[['B','C','sky','Estimated Cutting (h)'],['D','D','sky','Coef.'],['E','F','sky','Proposed<br>Cutting (h)'],['G','H','blush','Estimated Milling (h)'],['I','I','blush','Coef.'],['J','K','pink','Proposed<br>Milling (h)'],['L','M','mint','Estimated<br>Turning (h)'],['N','N','mint','Coef.'],['O','P','mint','Proposed<br>Turning (h)'],['Q','R','cream','Estimated<br>Wire (h)'],['S','S','cream','Coef.'],['T','U','cream','Proposed<br>Wire (h)'],['V','V','aqua','Estimated<br>Polishing (h)'],['W','W','aqua','Coef.'],['X','X','aqua','Proposed<br>Polishing (h)'],['Y','Y','red','Estimated<br>Control (h)'],['Z','Z','red','Coef.'],['AA','AA','red','Proposed<br>Control (h)'],['AB','AB','peri','Estimated<br>Assembly (h)'],['AC','AC','peri','Coef.'],['AD','AD','peri','Proposed<br>Assembly (h)']].forEach(([a, b, k, t]) => cell(`${a}34:${b}34`, 'c b hd sm ' + k, t));
const tint = ['sky','sky','blue','sky','sky','blush','blush','orange','pink','pink','mint','mint','leaf','mint','mint','cream','cream','gold','cream','cream','aqua','lime','aqua','red','sand','red','peri','silver','peri'];
[
 'Top plate|0,75 5,00 1,30 0,75 6,50 1,00 25,00 2,10 1,00 52,50 - - - - - - - - - - 2,00 2,10 20,00 2,00 2,50 20,00 3,00 2,50 15,00',
 'Cavity Plate|1,00 7,00 1,60 1,00 11,20 1,50 45,00 3,90 1,50 175,50 1,00 1,00 3,90 1,00 10,00 1,50 8,00 3,90 1,50 45,00 3,00 3,90 30,00 2,00 3,60 20,00 4,00 3,60 16,00',
 'Core Plate|1,00 9,00 1,30 1,00 11,70 0,75 24,00 2,10 0,75 50,40 1,50 2,75 2,10 1,50 30,00 2,25 14,00 2,10 2,25 75,00 4,00 2,10 40,00 2,00 2,50 20,00 4,00 2,50 16,00',
 'Support Plate|0,50 5,00 1,10 0,50 5,50 1,50 40,00 2,40 1,50 96,00 - - - - - - - - - - 3,00 2,40 30,00 2,00 3,30 20,00 3,00 3,30 9,00',
 'Support Block|1,75 14,00 1,60 1,75 22,40 1,75 80,00 2,40 1,75 192,00 - - - - - 1,00 6,50 2,40 1,00 40,00 5,00 2,40 50,00 2,00 3,30 20,00 5,00 3,30 25,00',
 'Bottom plate|0,75 10,00 1,00 0,75 10,00 1,00 50,00 1,80 1,00 90,00 - - - - - - - - - - 4,00 1,80 40,00 2,00 2,50 20,00 3,00 2,50 9,00',
 'Ejector Plate|1,00 15,00 1,50 1,00 22,50 1,00 75,00 3,10 1,00 232,50 1,25 2,25 3,10 1,25 25,00 2,00 8,50 3,10 2,00 12,00 3,00 3,10 30,00 2,00 2,00 20,00 3,00 2,00 15,00'
].forEach((line, i) => {
  const [label, nums] = line.split('|'), r = 35 + i;
  cell(`A${r}`, 'l b', label);
  nums.split(' ').forEach((v, j) => cell(names[j + 1] + r, v === '-' ? 'ash' : tint[j], v === '-' ? '' : v));
});
put(range('A35:A41'), 'frame');
['B:F','G:K','L:P','Q:U','V:X','Y:AA','AB:AD'].forEach(p => { const [a, b] = p.split(':'); put(range(`${a}34:${b}41`), 'frame'); });

cell('B43', 'c b sm navy', 'Proposed (H)');
[['Design','40,00'],['CAM','60,00'],['Conception','40,00'],['Programming','90,00'],['Global Polishing','42,00'],['Global Assembly','84,00'],['Global Control','60,00'],['Packaging','25,00']].forEach(([a, b], i) => { cell('A' + (44 + i), 'l b', a); cell('B' + (44 + i), '', b); });
['A44:A51','B43:B51'].forEach(f => put(range(f), 'frame'));

cell('F44:G44', 'c b sm navy', 'Heat treatment (€)');
cell('H44:I44', 'c b sm navy', 'Welding (€)');
cell('J44:K44', 'c b sm navy', 'Other Machining (€)');
[['Top plate','140,92'],['Cavity Plate','195,85'],['Core Plate','266,40'],['Support Plate','42,15'],['Support Block','409,51'],['Bottom plate','46,49'],['Ejector Plate','22,09']].forEach(([a, b], i) => {
  const r = 45 + i;
  cell(`D${r}:E${r}`, 'l b', a); cell(`F${r}:G${r}`, 'c', b); cell(`H${r}:I${r}`, ''); cell(`J${r}:K${r}`, '');
});
['D45:E51','F44:K51','F44:K44'].forEach(f => put(range(f), 'frame'));
cell('N45:P45', 'c b lg navy', 'Heat Tratment price €/Kg');
cell('Q45:R45', 'c', '0,8');
put(range('N45:R45'), 'frame');

cell('A53', '');
cell('B53', 'l b sm navy', 'Proposed (€)');
cell('A54', 'l ghost', 'Transport');
cell('B54', 'ghost', '1500,00');
['A53','B53'].forEach(f => put(range(f), 'frame'));
put(range('C53'), 'select');
```
